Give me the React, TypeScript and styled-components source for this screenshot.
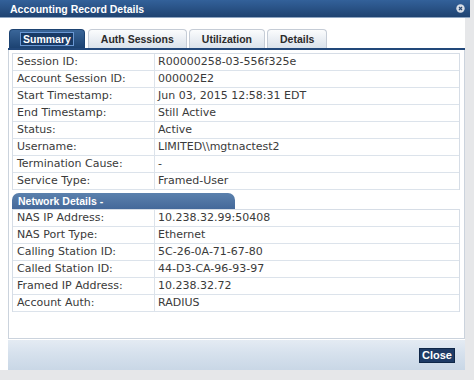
import styled, { createGlobalStyle } from 'styled-components';

const GlobalStyle = createGlobalStyle`
  html, body {
    margin: 0;
    padding: 0;
  }
  body {
    width: 474px;
    height: 380px;
    overflow: hidden;
    background: #e6e7e9;
    font-family: "DejaVu Sans", Verdana, sans-serif;
  }
`;

type Field = { label: string; value: string };

const sessionFields: Field[] = [
  { label: 'Session ID:', value: 'R00000258-03-556f325e' },
  { label: 'Account Session ID:', value: '000002E2' },
  { label: 'Start Timestamp:', value: 'Jun 03, 2015 12:58:31 EDT' },
  { label: 'End Timestamp:', value: 'Still Active' },
  { label: 'Status:', value: 'Active' },
  { label: 'Username:', value: 'LIMITED\\\\mgtnactest2' },
  { label: 'Termination Cause:', value: '-' },
  { label: 'Service Type:', value: 'Framed-User' },
];

const networkFields: Field[] = [
  { label: 'NAS IP Address:', value: '10.238.32.99:50408' },
  { label: 'NAS Port Type:', value: 'Ethernet' },
  { label: 'Calling Station ID:', value: '5C-26-0A-71-67-80' },
  { label: 'Called Station ID:', value: '44-D3-CA-96-93-97' },
  { label: 'Framed IP Address:', value: '10.238.32.72' },
  { label: 'Account Auth:', value: 'RADIUS' },
];

const tabs = ['Summary', 'Auth Sessions', 'Utilization', 'Details'];

const Dialog = styled.div`
  width: 470px;
  display: flex;
  flex-direction: column;
`;

const TitleBar = styled.div`
  height: 17px;
  border-bottom: 1px solid #8ea5c1;
  background: linear-gradient(#33619a, #1f4371);
  display: flex;
  align-items: center;
  justify-content: space-between;
  padding: 0 5px 0 10px;
`;

const Title = styled.span`
  font-family: "Liberation Sans", Arial, sans-serif;
  font-weight: bold;
  font-size: 10.5px;
  color: #ffffff;
`;

const Body = styled.div`
  width: 465px;
  height: 352px;
  box-sizing: border-box;
  background: #ffffff;
  padding-top: 11px;
  display: flex;
  flex-direction: column;
`;

const TabList = styled.div`
  margin-left: 8px;
  padding-left: 1px;
  display: flex;
  gap: 2px;
  border-bottom: 2px solid #22487a;
`;

const Tab = styled.div<{ $active?: boolean }>`
  height: 19px;
  box-sizing: border-box;
  padding: 0 ${({ $active }) => ($active ? '10px' : '12px')};
  display: flex;
  align-items: center;
  border: 1px solid ${({ $active }) => ($active ? '#1d4372' : '#c5ccd6')};
  border-bottom: none;
  border-radius: 4px 4px 0 0;
  background: ${({ $active }) =>
    $active
      ? 'linear-gradient(#3a6699, #1c4271)'
      : 'linear-gradient(#fbfcfd, #dae2eb)'};
  color: ${({ $active }) => ($active ? '#ffffff' : '#2b2b2b')};
  font-family: "Liberation Sans", Arial, sans-serif;
  font-weight: bold;
  font-size: 10.5px;
  margin-right: ${({ $active }) => ($active ? '1px' : '0')};
`;

const FocusLabel = styled.span`
  padding: 0 2px;
  line-height: 12px;
  border: 1px solid #6a98d4;
  background: #183a66;
`;

const Panel = styled.div`
  margin-left: 8px;
  height: 289px;
  box-sizing: border-box;
  border: 1px solid #cbd3dd;
  border-top: none;
  padding: 3px 4px 0 3px;
  display: flex;
  flex-direction: column;
`;

const Table = styled.div`
  border: 1px solid #d6dde6;
  border-bottom: none;
`;

const Row = styled.div`
  display: grid;
  grid-template-columns: 142px 1fr;
  height: 17px;
  box-sizing: border-box;
  border-bottom: 1px solid #dce3eb;
  font-size: 11px;
  line-height: 16px;
  color: #3a3a3a;
`;

const Label = styled.div`
  padding-left: 4px;
  border-right: 1px solid #dce3eb;
  white-space: nowrap;
`;

const Value = styled.div`
  padding-left: 3px;
  white-space: nowrap;
`;

const SectionHeader = styled.div`
  margin-top: 3px;
  width: 223px;
  height: 16px;
  box-sizing: border-box;
  padding-left: 6px;
  border-radius: 7px 7px 0 0;
  background: linear-gradient(#5b81ad, #44699a);
  color: #ffffff;
  font-family: "Liberation Sans", Arial, sans-serif;
  font-weight: bold;
  font-size: 10.5px;
  line-height: 16px;
`;

const Footer = styled.div`
  margin-top: 1px;
  margin-left: 8px;
  height: 30px;
  box-sizing: border-box;
  background: linear-gradient(#e4ebf3 0%, #d6e1ed 45%, #c9d7e6 100%);
  display: flex;
  align-items: center;
  justify-content: flex-end;
  padding-right: 10px;
`;

const CloseButton = styled.button`
  width: 36px;
  height: 15px;
  padding: 0;
  border: 1px solid #0f2748;
  background: #1e3b66;
  color: #ffffff;
  font-family: "Liberation Sans", Arial, sans-serif;
  font-weight: bold;
  font-size: 11px;
  line-height: 13px;
  cursor: pointer;
`;

const CloseIcon = () => (
  <svg width="9" height="9" viewBox="0 0 9 9">
    <circle cx="4.5" cy="4.5" r="4.2" fill="#d7dde6" />
    <path d="M3 3 L6 6 M6 3 L3 6" stroke="#2b4a74" strokeWidth="1.2" />
  </svg>
);

const FieldTable = ({ fields }: { fields: Field[] }) => (
  <Table>
    {fields.map((f) => (
      <Row key={f.label}>
        <Label>{f.label}</Label>
        <Value>{f.value}</Value>
      </Row>
    ))}
  </Table>
);

export default function App() {
  return (
    <>
      <GlobalStyle />
      <Dialog>
        <TitleBar>
          <Title>Accounting Record Details</Title>
          <CloseIcon />
        </TitleBar>
        <Body>
          <TabList>
            {tabs.map((t, i) => (
              <Tab key={t} $active={i === 0}>
                {i === 0 ? <FocusLabel>{t}</FocusLabel> : t}
              </Tab>
            ))}
          </TabList>
          <Panel>
            <FieldTable fields={sessionFields} />
            <SectionHeader>Network Details -</SectionHeader>
            <FieldTable fields={networkFields} />
          </Panel>
          <Footer>
            <CloseButton>Close</CloseButton>
          </Footer>
        </Body>
      </Dialog>
    </>
  );
}
